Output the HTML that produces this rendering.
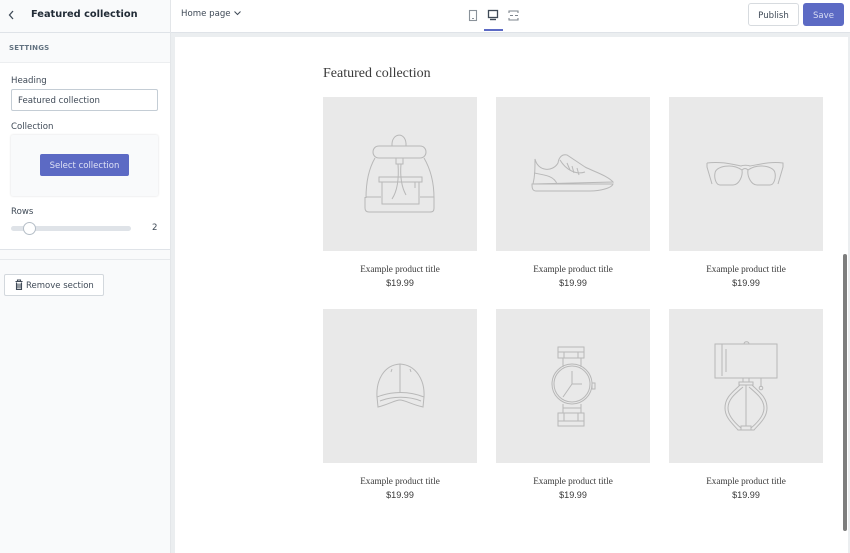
<!DOCTYPE html>
<html><head><meta charset="utf-8"><style>
html,body{margin:0;padding:0;width:850px;height:553px;overflow:hidden;background:#ebeef0}
body{position:relative;font-family:"DejaVu Sans",sans-serif;color:#3f4a57}
.a{position:absolute;white-space:nowrap}
.tile{position:absolute;width:154px;height:154px;background:#e9e9e9}
.pt{position:absolute;width:154px;text-align:center;font:9.2px/12px "Liberation Serif",serif;color:#3a3a3a}
.pr{position:absolute;width:154px;text-align:center;font:9.1px/12px "Liberation Sans",sans-serif;color:#3a3a3a}
svg.ic{position:absolute;left:0;top:0}
</style></head><body>
<div class="a" style="left:0;top:0;width:170px;height:553px;background:#f9fafb;border-right:1px solid #e3e6e9"></div>
<div class="a" style="left:0;top:32px;width:170px;height:1px;background:#dfe3e8"></div>
<div class="a" style="left:171px;top:0;width:679px;height:32px;background:#fff;border-bottom:1px solid #dfe3e8"></div>
<div class="a" style="left:175px;top:37px;width:673px;height:516px;background:#fff"></div>

<svg class="a" style="left:6px;top:9px" width="10" height="12"><path d="M7 2 L3.5 6 L7 10" fill="none" stroke="#3f4a57" stroke-width="1.3"/></svg>
<div class="a" style="left:31px;top:8px;font-size:9.8px;line-height:14px;font-weight:bold;color:#212b36">Featured collection</div>
<div class="a" style="left:9px;top:43px;font-size:7px;line-height:10px;font-weight:bold;color:#637381;letter-spacing:.2px">SETTINGS</div>

<div class="a" style="left:0;top:62px;width:170px;height:188px;background:#fff;border-top:1px solid #eceef0;border-bottom:1px solid #dfe3e8;box-sizing:border-box"></div>
<div class="a" style="left:11px;top:75px;font-size:8.6px;line-height:13px">Heading</div>
<div class="a" style="left:11px;top:89px;width:147px;height:22px;box-sizing:border-box;background:#fff;border:1px solid #c4cdd5;border-radius:2px;font-size:8.6px;line-height:23px;padding-left:6px">Featured collection</div>
<div class="a" style="left:11px;top:121px;font-size:8.6px;line-height:13px">Collection</div>
<div class="a" style="left:11px;top:135px;width:147px;height:61px;box-sizing:border-box;background:#f9fafb;border-radius:2px;box-shadow:0 0 2px rgba(63,63,68,.18)"></div>
<div class="a" style="left:40px;top:154px;width:89px;height:22px;background:#5c6ac4;border-radius:2px;color:#dfe2f5;font-size:8.5px;line-height:25px;text-align:center">Select collection</div>
<div class="a" style="left:11px;top:206px;font-size:8.6px;line-height:13px">Rows</div>
<div class="a" style="left:11px;top:226px;width:120px;height:5px;background:#dfe3e8;border-radius:3px"></div>
<div class="a" style="left:23px;top:222px;width:13px;height:13px;box-sizing:border-box;background:#fff;border:1px solid #b5bec7;border-radius:50%"></div>
<div class="a" style="left:152px;top:222px;font-size:8.6px;line-height:13px">2</div>

<div class="a" style="left:0;top:259px;width:170px;height:1px;background:#e6e9ec"></div>
<div class="a" style="left:4px;top:274px;width:100px;height:22px;box-sizing:border-box;background:#fff;border:1px solid #d3d8dd;border-radius:2px;font-size:8.5px;line-height:23px;padding-left:21px;color:#3f4a57">Remove section</div>
<svg class="a" style="left:14px;top:279px" width="10" height="12"><path d="M1.5 2.5H8.5M3.5 2.5V1H6.5V2.5M2.5 3.5V10.5H7.5V3.5M4 4.5V9.5M6 4.5V9.5" fill="none" stroke="#3f4a57" stroke-width="1.1"/></svg>

<div class="a" style="left:181px;top:8px;font-size:8.6px;line-height:13px">Home page</div>
<svg class="a" style="left:233px;top:10px" width="9" height="7"><path d="M1.5 1.5 L4.5 4.5 L7.5 1.5" fill="none" stroke="#3f4a57" stroke-width="1"/></svg>

<svg class="a" style="left:465px;top:6px" width="60" height="20" fill="none">
<rect x="4.5" y="4.5" width="7" height="10" stroke="#8a929a" stroke-width="1.1"/><path d="M7 12.5H9" stroke="#8a929a"/>
<rect x="23.5" y="4.5" width="9" height="7" stroke="#3f4a57" stroke-width="1.3"/><path d="M25 13.5H31" stroke="#3f4a57" stroke-width="1.4"/>
<path d="M44 7V5H53V7M44 12V14H53V12M45 9.5H48M50 9.5H53" stroke="#7d858d" stroke-width="1.1"/>
</svg>
<div class="a" style="left:484px;top:29px;width:19px;height:2px;background:#5c6ac4"></div>
<div class="a" style="left:748px;top:3px;width:51px;height:23px;box-sizing:border-box;background:#fff;border:1px solid #d7dbdf;border-radius:3px;font-size:8.6px;line-height:24px;text-align:center">Publish</div>
<div class="a" style="left:803px;top:3px;width:41px;height:23px;background:#5c6ac4;border-radius:3px;color:#d8dcf3;font-size:8.6px;line-height:26px;text-align:center">Save</div>

<div class="a" style="left:323px;top:65px;font:14px/18px 'Liberation Serif',serif;color:#3a3a3a">Featured collection</div>

<div class="tile" style="left:323px;top:97px"></div>
<div class="tile" style="left:496px;top:97px"></div>
<div class="tile" style="left:669px;top:97px"></div>
<div class="tile" style="left:323px;top:309px"></div>
<div class="tile" style="left:496px;top:309px"></div>
<div class="tile" style="left:669px;top:309px"></div>

<div class="pt" style="left:323px;top:263px">Example product title</div><div class="pr" style="left:323px;top:277px">$19.99</div>
<div class="pt" style="left:496px;top:263px">Example product title</div><div class="pr" style="left:496px;top:277px">$19.99</div>
<div class="pt" style="left:669px;top:263px">Example product title</div><div class="pr" style="left:669px;top:277px">$19.99</div>
<div class="pt" style="left:323px;top:475px">Example product title</div><div class="pr" style="left:323px;top:489px">$19.99</div>
<div class="pt" style="left:496px;top:475px">Example product title</div><div class="pr" style="left:496px;top:489px">$19.99</div>
<div class="pt" style="left:669px;top:475px">Example product title</div><div class="pr" style="left:669px;top:489px">$19.99</div>

<svg class="ic" width="850" height="553" fill="none" stroke="#b8b8b8" stroke-width="1">
<!-- backpack -->
<path d="M392 146C391 132 407 131 406 146"/>
<path d="M379 146H420C428 146 428 158 420 158H379C371 158 371 146 379 146Z"/>
<path d="M375 158C368 170 366 184 366 198M424 158C431 170 434 184 434 198"/>
<path d="M366 197H381M420 197H434M365 197V208C365 211 367 212 369 212H430C433 212 434 211 434 208V197"/>
<path d="M379 177H422V182H379ZM382 182V204H419V182"/>
<path d="M396 158V164H403V158M398 164C399 178 398 190 392 199M401 164C400 176 401 186 406 195"/>
<path d="M415 182V188"/>
<!-- shoe -->
<path d="M535 159C538 172 553 172 558 163C559 157 562 154 567 155L585 167C595 172 608 176 613 182L533 184C535 176 535 168 535 159Z"/>
<path d="M532 184H613C612 188 600 191 590 191H536C532 191 532 187 532 184Z"/>
<path d="M534 173C545 175 554 176 557 184M560 160C566 170 576 175 585 172"/>
<path d="M567 163L570 170M572 166L574 173M577 168L579 175"/>
<!-- glasses -->
<path d="M707 163C722 161 735 165 741 166C743 165 748 165 750 166C757 165 770 161 783 163V167L778 184M707 163V167L712 184"/>
<path d="M715 173C716 166 732 163 742 170C743 176 739 185 733 185H720C716 185 714 178 715 173Z"/>
<path d="M775 173C774 166 758 163 748 170C747 176 751 185 757 185H770C774 185 776 178 775 173Z"/>
<path d="M742 170C744 168 746 168 748 170"/>
<!-- cap -->
<path d="M377 397C376 380 384 365 400 364C416 365 425 380 424 397"/>
<path d="M377 397C392 391 409 391 424 397L423 407C410 404 405 400 400 400C395 400 390 404 378 407Z"/>
<path d="M400 364V392M380 401C392 396 409 396 421 401M392 369L391 372M410 369L411 372"/>
<!-- watch -->
<circle cx="572" cy="384" r="20"/><circle cx="572" cy="384" r="18"/>
<path d="M572 371V384H582M572 384L563 397"/>
<path d="M558 347H584V352H558ZM558 352V358H584V352M563 358H581V367M563 358V367M564 352V358M578 352V358"/>
<path d="M558 426H584V421H558ZM558 421V413H584V421M563 413V404M581 413V404M564 413V421M578 413V421M563 408H581"/>
<rect x="592" y="383" width="3" height="6"/>
<!-- lamp -->
<rect x="715" y="344" width="62" height="34"/>
<path d="M722 344V376M726 349V372M744 344C744 341 749 341 749 344"/>
<path d="M743 378V382H749V378M739 382H753V385H739Z"/>
<path d="M740 385C733 392 725 397 725 408C725 418 733 424 738 430H754C759 424 767 418 767 408C767 397 759 392 752 385"/>
<path d="M743 387C736 393 728 399 728 408C728 416 735 423 741 428M749 387C756 393 764 399 764 408C764 416 757 423 751 428"/>
<path d="M746 385V426M741 430V426H751V430"/>
<path d="M761 378V387"/><circle cx="761" cy="388" r="1.8"/>
</svg>

<div class="a" style="left:843px;top:254px;width:4px;height:277px;background:#7d7d7d;border-radius:2px"></div>
</body></html>
